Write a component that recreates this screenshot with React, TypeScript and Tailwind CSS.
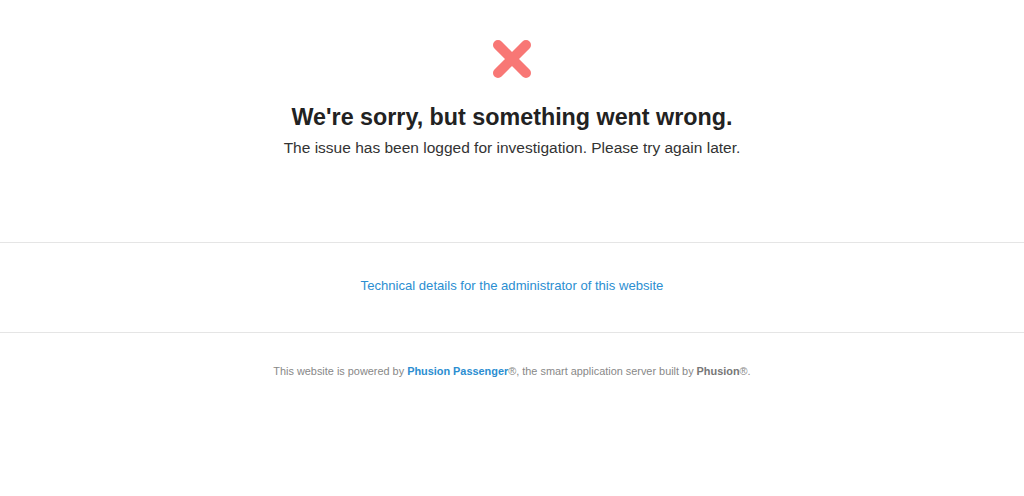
export default function App() {
  return (
    <div className="min-h-[496px] bg-white font-['Liberation_Sans',Arial,sans-serif]">
      <div className="flex flex-col items-center pt-[39px]">
        <svg width="40" height="40" viewBox="0 0 40 40">
          <path d="M6 6 L34 34 M34 6 L6 34" stroke="#f87775" strokeWidth="10" strokeLinecap="round" />
        </svg>
        <h1 className="mt-[24px] text-[23.3px] leading-[28px] font-bold text-[#222]">We're sorry, but something went wrong.</h1>
        <p className="mt-[7px] text-[15.5px] leading-[20px] text-[#333]">The issue has been logged for investigation. Please try again later.</p>
      </div>
      <div className="mt-[84px] border-t border-[#e5e5e5] flex justify-center pt-[33px] pb-[36px]">
        <a href="#" className="text-[13.1px] leading-[20px] text-[#2b8ed1]">Technical details for the administrator of this website</a>
      </div>
      <div className="border-t border-[#e5e5e5] flex justify-center pt-[30px]">
        <p className="text-[10.9px] leading-[16px] text-[#888]">
          This website is powered by <a href="#" className="font-bold text-[#2b8ed1]">Phusion Passenger</a>®, the smart application server built by <b className="text-[#777]">Phusion</b>®.
        </p>
      </div>
    </div>
  )
}
